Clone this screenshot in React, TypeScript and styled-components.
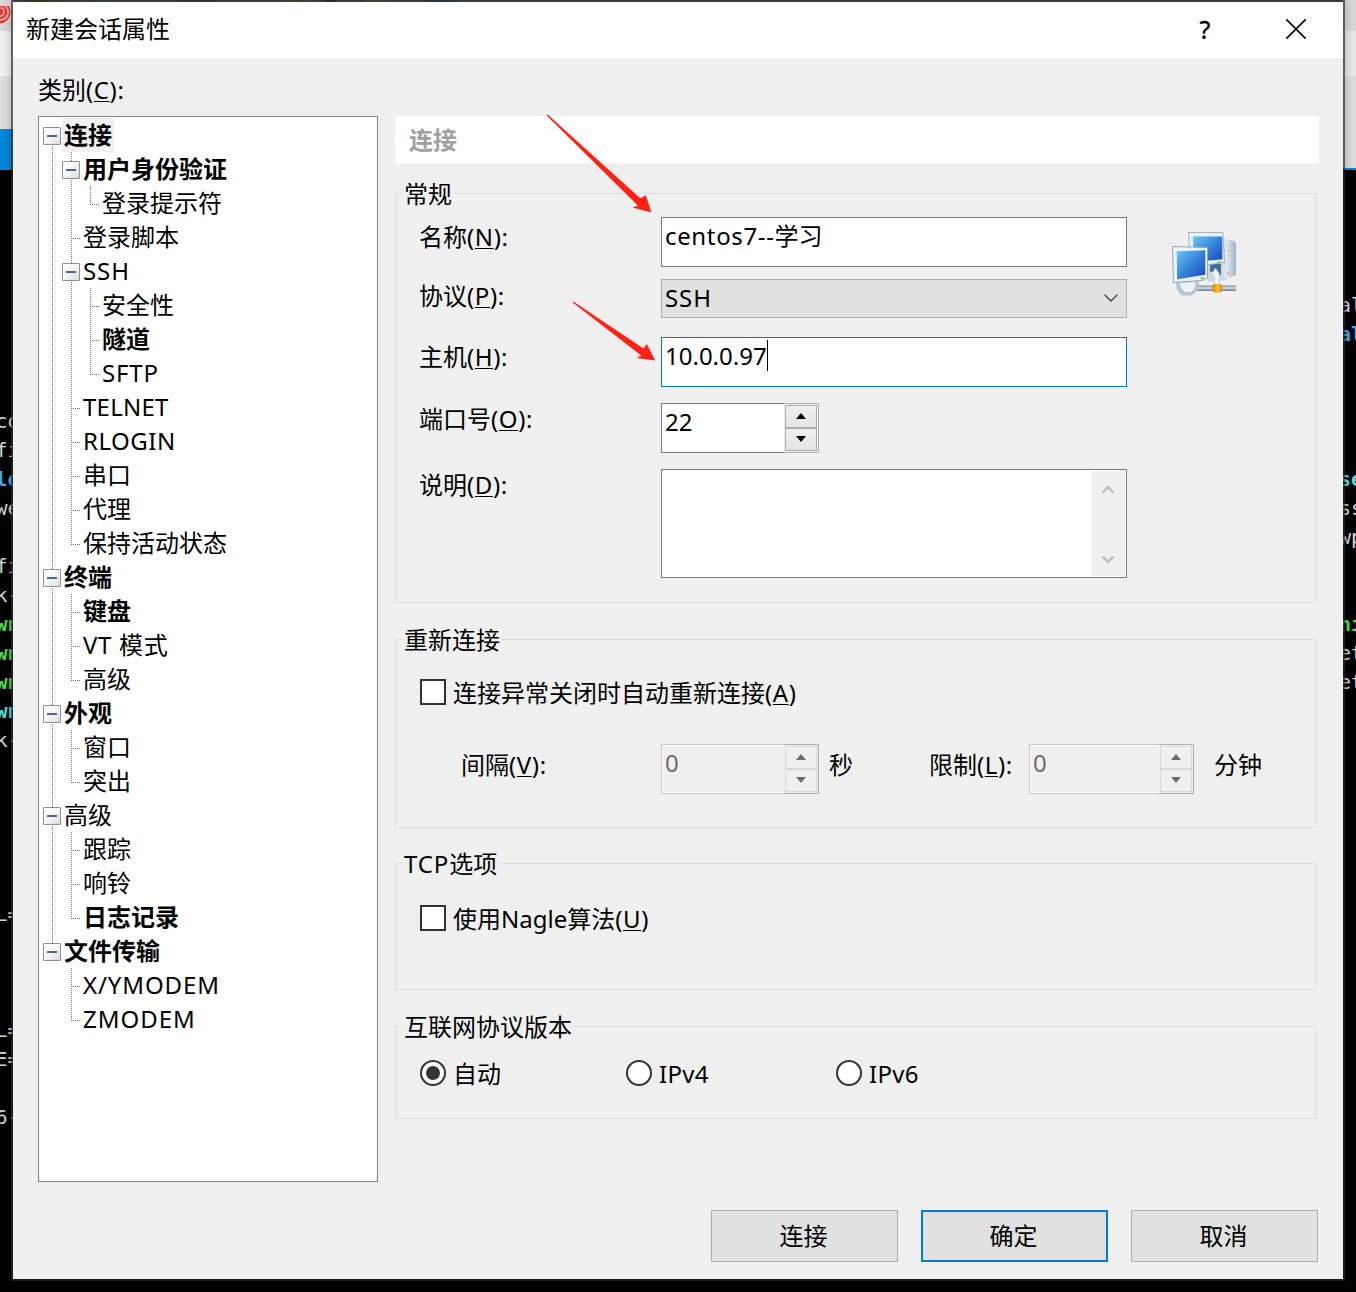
import React from "react";
import styled, { createGlobalStyle, css } from "styled-components";

const GlobalStyle = createGlobalStyle`
  * { box-sizing: border-box; }
  body { margin: 0; background: #000; }
`;

/* ---------- desktop behind the dialog ---------- */

const Desktop = styled.div`
  position: relative;
  display: grid;
  grid-template-columns: 13px 1330px 13px;
  width: 1356px;
  height: 1292px;
  overflow: hidden;
  background: #000;
  color: #000;
  font: 24px/34px "Noto Sans", "Noto Sans CJK SC", sans-serif;
  white-space: nowrap;
`;

const Strip = styled.div`
  display: flex;
  flex-direction: column;
  overflow: hidden;
  min-width: 0;
`;

const Band = styled.div<{ $h: number; $bg: string }>`
  flex: none;
  height: ${(p) => p.$h}px;
  background: ${(p) => p.$bg};
  overflow: hidden;
`;

const Terminal = styled.div<{ $shift: number }>`
  padding-top: 5px;
  margin-left: ${(p) => p.$shift}px;
  font: 20px/29px "DejaVu Sans Mono", monospace;
`;

const TermLine = styled.div<{ $color?: string }>`
  height: 29px;
  color: ${(p) => p.$color ?? "#d8d8d8"};
  font-weight: ${(p) => (p.$color ? 700 : 400)};
`;

const Center = styled.div`
  display: flex;
  flex-direction: column;
`;

const Toolbar = styled.div`
  height: 2px;
  background: linear-gradient(
    90deg,
    #696969 0 14px, #3f6a1c 14px 44px, #696969 44px 78px, #3f7a58 78px 94px,
    #696969 94px 168px, #4b4b4b 168px 202px, #696969 202px 272px, #8d6a40 272px 300px,
    #696969 300px 312px, #333 312px 323px, #696969 323px 352px, #7d7d50 352px 372px,
    #696969 372px 412px, #2d5d8d 412px 445px, #696969 445px
  );
`;

/* ---------- dialog ---------- */

const Dialog = styled.div`
  position: relative;
  width: 1330px;
  height: 1277px;
  background: #f0f0f0;
  box-shadow: 0 0 0 2px rgba(42, 42, 42, 0.66), 0 0 10px 2px rgba(0, 0, 0, 0.25);
`;

const TitleBar = styled.div`
  display: flex;
  align-items: center;
  height: 56px;
  padding: 0 36px 2px 13px;
  background: #fff;
`;

const Title = styled.div`
  flex: 1;
`;

const HelpMark = styled.div`
  width: 14px;
  margin-right: 73px;
  font-size: 25px;
  text-align: center;
  -webkit-text-stroke: 0.4px #000;
`;

const Main = styled.div`
  display: flex;
  gap: 17px;
  padding: 15px 24px 0 25px;
`;

const Sidebar = styled.div`
  width: 340px;
`;

const Key = styled.span`
  letter-spacing: 0.6px;
`;

const Underlined = styled.span`
  text-decoration: underline;
  text-decoration-thickness: 1px;
  text-underline-offset: 2px;
  text-decoration-skip-ink: none;
`;

const Spaced = styled.span<{ $ls: number }>`
  letter-spacing: ${(p) => p.$ls}px;
`;

const Tree = styled.div`
  height: 1066px;
  margin-top: 9px;
  padding: 1px 0 0 4px;
  border: 1px solid #828790;
  background: #fff;
`;

const TreeRow = styled.div`
  display: flex;
  height: 34px;
`;

type Guide = "none" | "through" | "tee" | "end" | "start";

const dotsV = "repeating-linear-gradient(180deg, #6f6f6f 0 1px, transparent 1px 2px)";
const dotsH = "repeating-linear-gradient(90deg, #6f6f6f 0 1px, transparent 1px 2px)";

const guideStyles: Record<Guide, ReturnType<typeof css>> = {
  none: css``,
  through: css`
    background: ${dotsV} 9px 0 / 1px 34px no-repeat;
  `,
  tee: css`
    background: ${dotsV} 9px 0 / 1px 34px no-repeat, ${dotsH} 9px 18px / 10px 1px no-repeat;
  `,
  end: css`
    background: ${dotsV} 9px 0 / 1px 18px no-repeat, ${dotsH} 9px 18px / 10px 1px no-repeat;
  `,
  start: css`
    background: ${dotsV} 9px 18px / 1px 16px no-repeat, ${dotsH} 9px 18px / 10px 1px no-repeat;
  `,
};

const GuideCell = styled.div<{ $guide: Guide }>`
  width: 19px;
  height: 34px;
  padding-top: 9px;
  ${(p) => guideStyles[p.$guide]}
`;

const Expander = styled.div`
  display: flex;
  align-items: center;
  justify-content: center;
  width: 18px;
  height: 18px;
  border: 1px solid #919191;
  border-radius: 1px;
  background: linear-gradient(135deg, #fff 30%, #dcdcdc);

  &::after {
    content: "";
    width: 10px;
    height: 2px;
    background: #4b63a7;
  }
`;

const NodeText = styled.div<{ $bold?: boolean; $selected?: boolean; $ls?: number }>`
  padding: 0 2px;
  line-height: 33px;
  height: 34px;
  font-weight: ${(p) => (p.$bold ? 700 : 400)};
  letter-spacing: ${(p) => p.$ls ?? 0}px;
  background: ${(p) => (p.$selected ? "#f0f0f0" : "transparent")};
`;

const Panel = styled.div`
  width: 924px;
  padding-top: 43px;
`;

const PanelHeader = styled.div`
  height: 47px;
  margin-bottom: 30px;
  padding-left: 14px;
  background: #fff;
  color: #a0a0a0;
  font-weight: 700;
  line-height: 48px;
`;

const Group = styled.div<{ $h: number; $gap: number }>`
  width: 921px;
  height: ${(p) => p.$h}px;
  margin-bottom: ${(p) => p.$gap}px;
  border: 1px solid #dcdcdc;
`;

const GroupTitle = styled.div`
  width: fit-content;
  height: 34px;
  margin: -16px 0 0 6px;
  padding: 0 2px;
  line-height: 32px;
  background: #f0f0f0;
`;

const GeneralBody = styled.div`
  display: flex;
  align-items: flex-start;
  gap: 45px;
  padding: 5px 0 0 23px;
`;

const Fields = styled.div`
  width: 708px;
`;

const FieldRow = styled.div<{ $gap: number }>`
  display: flex;
  align-items: flex-start;
  margin-bottom: ${(p) => p.$gap}px;
`;

const FieldLabel = styled.div<{ $top?: number }>`
  width: 242px;
  padding-top: ${(p) => p.$top ?? 0}px;
  line-height: 32px;
`;

const IconSlot = styled.div`
  padding-top: 15px;
`;

const TextBox = styled.div<{ $focus?: boolean }>`
  display: flex;
  width: 466px;
  height: 50px;
  padding: 1px 3px;
  border: 1px solid ${(p) => (p.$focus ? "#0078d7" : "#7a7a7a")};
  background: #fff;
`;

const Caret = styled.div`
  width: 1px;
  height: 31px;
  margin-top: 1px;
  background: #000;
`;

const Select = styled.div`
  display: flex;
  align-items: center;
  justify-content: space-between;
  width: 466px;
  height: 39px;
  padding: 0 8px 1px 3px;
  border: 1px solid #adadad;
  background: #e1e1e1;
`;

const TextArea = styled.div`
  display: flex;
  justify-content: flex-end;
  width: 466px;
  height: 109px;
  padding: 1px;
  border: 1px solid #7a7a7a;
  background: #fff;
`;

const ScrollTrack = styled.div`
  display: flex;
  flex-direction: column;
  justify-content: space-between;
  align-items: center;
  width: 33px;
  padding: 13px 1px 11px 0;
  background: #f0f0f0;
`;

const SpinBox = styled.div<{ $w: number }>`
  display: flex;
  width: ${(p) => p.$w}px;
  height: 50px;
`;

const SpinValue = styled.div<{ $disabled?: boolean }>`
  flex: 1;
  padding: 1px 3px;
  border: 1px solid ${(p) => (p.$disabled ? "#c8c8c8" : "#7a7a7a")};
  border-right: 0;
  background: ${(p) => (p.$disabled ? "#f0f0f0" : "#fff")};
  color: ${(p) => (p.$disabled ? "#6d6d6d" : "#000")};
  box-shadow: ${(p) => (p.$disabled ? "inset 1px 1px #fff, inset 0 -1px #fff" : "none")};
`;

const SpinButtons = styled.div`
  display: flex;
  flex-direction: column;
  width: 35px;
  padding: 1px;
  border: 1px solid #abadb3;
  border-left: 0;
  background: #f0f0f0;
`;

const SpinButton = styled.div<{ $disabled?: boolean }>`
  display: flex;
  flex: 1;
  align-items: center;
  justify-content: center;
  width: 32px;
  padding-bottom: 1px;
  border: 1px solid ${(p) => (p.$disabled ? "#d9d9d9" : "#acacac")};
  background: ${(p) => (p.$disabled ? "#f0f0f0" : "linear-gradient(#f0f0f0, #e5e5e5)")};
`;

const CheckRow = styled.div<{ $top: number }>`
  display: flex;
  gap: 7px;
  padding: ${(p) => p.$top}px 0 0 24px;
`;

const CheckBox = styled.div`
  width: 26px;
  height: 26px;
  margin-top: 3px;
  border: 2px solid #333;
  background: #fff;
`;

const IntervalRow = styled.div`
  display: flex;
  align-items: flex-start;
  padding: 34px 0 0 65px;
`;

const Caption = styled.div<{ $w: number; $ml?: number }>`
  width: ${(p) => p.$w}px;
  margin-left: ${(p) => p.$ml ?? 0}px;
  padding-top: 4px;
`;

const RadioRow = styled.div`
  display: grid;
  grid-template-columns: 206px 210px 120px;
  padding: 12px 0 0 24px;
`;

const RadioItem = styled.div`
  display: flex;
  gap: 7px;
`;

const Radio = styled.div<{ $on?: boolean }>`
  display: flex;
  align-items: center;
  justify-content: center;
  width: 26px;
  height: 26px;
  margin-top: 3px;
  border: 2px solid #333;
  border-radius: 50%;
  background: #fff;

  &::after {
    content: "";
    width: 14px;
    height: 14px;
    border-radius: 50%;
    background: ${(p) => (p.$on ? "#333" : "transparent")};
  }
`;

const Footer = styled.div`
  display: flex;
  justify-content: flex-end;
  gap: 23px;
  padding: 28px 25px 0 0;
`;

const Button = styled.div<{ $primary?: boolean }>`
  display: flex;
  align-items: center;
  justify-content: center;
  width: 187px;
  height: 52px;
  padding: 0 2px 1px 0;
  border: ${(p) => (p.$primary ? "2px solid #0078d7" : "1px solid #adadad")};
  background: #e1e1e1;
`;

const Annotations = styled.svg`
  position: absolute;
  left: 0;
  top: 0;
  pointer-events: none;
`;

/* ---------- data ---------- */

type Line = [text: string, color?: string];

const GREEN = "#4be04b";
const CYAN = "#4fe3e3";
const BLUE = "#45a8ea";

const blank = (n: number): Line[] => Array.from({ length: n }, () => [""] as Line);

const leftLines: Line[] = [
  ...blank(8),
  ["co"], ["fi"], ["le", BLUE], ["we"], [""], ["fi"], ["k-"],
  ["wn", GREEN], ["wn", GREEN], ["wn", GREEN], ["wn", CYAN], ["k-"],
  ...blank(5),
  ["L="],
  ...blank(3),
  ["L="], ["E="], [""], ["6-"],
];

const rightLines: Line[] = [
  ...blank(4),
  ["al"], ["al", BLUE],
  ...blank(4),
  ["se", CYAN], ["ss"], ["wp"],
  ...blank(2),
  ["ni", GREEN], ["et"], ["et"],
];

interface TreeNode {
  label: string;
  bold?: boolean;
  selected?: boolean;
  spacing?: number;
  children?: TreeNode[];
}

const tree: TreeNode[] = [
  {
    label: "连接", bold: true, selected: true,
    children: [
      { label: "用户身份验证", bold: true, children: [{ label: "登录提示符" }] },
      { label: "登录脚本" },
      {
        label: "SSH", spacing: 0.9,
        children: [{ label: "安全性" }, { label: "隧道", bold: true }, { label: "SFTP", spacing: 0.8 }],
      },
      { label: "TELNET", spacing: 0.25 },
      { label: "RLOGIN", spacing: 0.5 },
      { label: "串口" },
      { label: "代理" },
      { label: "保持活动状态" },
    ],
  },
  {
    label: "终端", bold: true,
    children: [{ label: "键盘", bold: true }, { label: "VT 模式", spacing: 0.7 }, { label: "高级" }],
  },
  { label: "外观", bold: true, children: [{ label: "窗口" }, { label: "突出" }] },
  { label: "高级", children: [{ label: "跟踪" }, { label: "响铃" }, { label: "日志记录", bold: true }] },
  {
    label: "文件传输", bold: true,
    children: [{ label: "X/YMODEM", spacing: 0.9 }, { label: "ZMODEM", spacing: 1 }],
  },
];

/* ---------- parts ---------- */

function TreeLevel({ nodes, guides }: { nodes: TreeNode[]; guides: Guide[] }) {
  return (
    <>
      {nodes.map((node, i) => {
        const last = i === nodes.length - 1;
        const first = i === 0 && guides.length === 0;
        const own: Guide = first ? "start" : last ? "end" : "tee";
        return (
          <React.Fragment key={node.label}>
            <TreeRow>
              {guides.map((g, k) => (
                <GuideCell key={k} $guide={g} />
              ))}
              <GuideCell $guide={own}>{node.children && <Expander />}</GuideCell>
              <NodeText $bold={node.bold} $selected={node.selected} $ls={node.spacing}>{node.label}</NodeText>
            </TreeRow>
            {node.children && (
              <TreeLevel nodes={node.children} guides={[...guides, last ? "none" : "through"]} />
            )}
          </React.Fragment>
        );
      })}
    </>
  );
}

function Mnemonic({ text, letter, colon = true }: { text: string; letter: string; colon?: boolean }) {
  return (
    <div>
      {text}
      <Key>
        (<Underlined>{letter}</Underlined>){colon && ":"}
      </Key>
    </div>
  );
}

function Triangle({ down, color }: { down?: boolean; color: string }) {
  return (
    <svg width="10" height="6" viewBox="0 0 10 6">
      <path d={down ? "M0 0H10L5 6Z" : "M0 6H10L5 0Z"} fill={color} />
    </svg>
  );
}

function Spin({ value, width, disabled }: { value: string; width: number; disabled?: boolean }) {
  const color = disabled ? "#6d6d6d" : "#000";
  return (
    <SpinBox $w={width}>
      <SpinValue $disabled={disabled}>{value}</SpinValue>
      <SpinButtons>
        <SpinButton $disabled={disabled}><Triangle color={color} /></SpinButton>
        <SpinButton $disabled={disabled}><Triangle down color={color} /></SpinButton>
      </SpinButtons>
    </SpinBox>
  );
}

function ScrollChevron({ down }: { down?: boolean }) {
  return (
    <svg width="12" height="10" viewBox="0 0 12 10">
      <path d={down ? "M0.7 1.6L6 6.9L11.3 1.6" : "M0.7 8.4L6 3.1L11.3 8.4"} fill="none" stroke="#bfbfbf" strokeWidth="2.6" />
    </svg>
  );
}

function NetworkIcon() {
  return (
    <svg width="66" height="66" viewBox="0 0 66 66">
      <defs>
        <linearGradient id="screen" x1="0" y1="0" x2="1" y2="1">
          <stop offset="0" stopColor="#6cc6f2" />
          <stop offset="0.5" stopColor="#3585dc" />
          <stop offset="1" stopColor="#1c46b4" />
        </linearGradient>
        <linearGradient id="case" x1="0" y1="0" x2="1" y2="0">
          <stop offset="0" stopColor="#b4c5d2" />
          <stop offset="0.55" stopColor="#e3eaef" />
          <stop offset="1" stopColor="#9db3c4" />
        </linearGradient>
        <linearGradient id="pipe" x1="0" y1="0" x2="0" y2="1">
          <stop offset="0" stopColor="#6f8495" />
          <stop offset="0.45" stopColor="#d5dfe6" />
          <stop offset="1" stopColor="#5c7285" />
        </linearGradient>
        <linearGradient id="plug" x1="0" y1="0" x2="1" y2="0">
          <stop offset="0" stopColor="#e28212" />
          <stop offset="0.6" stopColor="#ffc02c" />
          <stop offset="1" stopColor="#e27a10" />
        </linearGradient>
      </defs>
      <path d="M46 4L54 6.5L62 9Q64 10 64 12V43L55 47L44 43Z" fill="url(#case)" />
      <path d="M55 13L61 14M55 18L61 19M55 23L61 24" stroke="#b4c4d0" strokeWidth="1" />
      <circle cx="56" cy="41" r="1.2" fill="#f2a08c" />
      <path d="M36 31H48L50 44L55 48L36 50L34 46Z" fill="#ccd8e1" />
      <path d="M38 32H49V44L45 38L42 44L38 39Z" fill="#3f6f9c" />
      <path d="M43.5 36L47.5 43V53H42.5V45L38 40L41 40Z" fill="#eef2f5" stroke="#b4c4d0" strokeWidth="0.6" />
      <path d="M16.5 0.5H51L52.5 30L36 33L18 29Z" fill="#e9eff3" stroke="#a0b3c1" strokeWidth="1" />
      <path d="M21 4.5H50.3V27.3L22 30Z" fill="url(#screen)" />
      <rect x="45" y="29.5" width="4" height="2" fill="#76d058" />
      <rect x="25" y="53.5" width="39" height="5.5" rx="1" fill="url(#pipe)" />
      <path d="M4 50L27 48Q28 60 19 63.5H10Q4 60 4 50Z" fill="#b6c6d2" />
      <path d="M8 51L23 50Q24 57 19 60H13Q8 57 8 51Z" fill="#edf2f5" />
      <path d="M0.5 14.5L35.5 15.5V46L30 48.5L1.5 50.5Z" fill="#eff3f6" stroke="#94a9b9" strokeWidth="1" />
      <path d="M4.7 19.3L33.3 18.3V42.7L5.2 47.2Z" fill="url(#screen)" />
      <path d="M28.5 45.5L32 45V47L28.5 47.5Z" fill="#76d058" />
      <rect x="40.5" y="52" width="9.5" height="8.5" rx="2" fill="url(#plug)" />
    </svg>
  );
}

const renderLines = (lines: Line[]) =>
  lines.map(([text, color], i) => (
    <TermLine key={i} $color={color}>{text}</TermLine>
  ));

export default function App() {
  return (
    <Desktop>
      <GlobalStyle />
      <Strip>
        <Band $h={31} $bg="#dadada">
          <svg width="13" height="20" viewBox="0 0 13 20">
            <circle cx="-1" cy="6" r="11.5" fill="#e93a34" />
            <path d="M-1 2Q5 1 4 7Q2 11 -2 10M1 -2Q9 0 8 8Q6 14 -1 14" fill="none" stroke="#f6c9c6" strokeWidth="1.4" />
          </svg>
        </Band>
        <Band $h={45} $bg="#f2f2f2" />
        <Band $h={53} $bg="#e0e0e0" />
        <Band $h={41} $bg="#0088dd" />
        <Terminal $shift={-4.5}>{renderLines(leftLines)}</Terminal>
      </Strip>
      <Center>
        <Toolbar />
        <Dialog>
          <TitleBar>
            <Title>新建会话属性</Title>
            <HelpMark>?</HelpMark>
            <svg width="22" height="22" viewBox="0 0 22 22">
              <path d="M1.3 1.3L20.7 20.7M20.7 1.3L1.3 20.7" stroke="#111" strokeWidth="1.8" />
            </svg>
          </TitleBar>
          <Main>
            <Sidebar>
              <Mnemonic text="类别" letter="C" />
              <Tree>
                <TreeLevel nodes={tree} guides={[]} />
              </Tree>
            </Sidebar>
            <Panel>
              <PanelHeader>连接</PanelHeader>
              <Group $h={410} $gap={36}>
                <GroupTitle>常规</GroupTitle>
                <GeneralBody>
                  <Fields>
                    <FieldRow $gap={12}>
                      <FieldLabel $top={4}><Mnemonic text="名称" letter="N" /></FieldLabel>
                      <TextBox><Spaced $ls={0.65}>centos7--</Spaced>学习</TextBox>
                    </FieldRow>
                    <FieldRow $gap={19}>
                      <FieldLabel $top={1}><Mnemonic text="协议" letter="P" /></FieldLabel>
                      <Select>
                        <Spaced $ls={0.9}>SSH</Spaced>
                        <svg width="14" height="8" viewBox="0 0 14 8">
                          <path d="M0.7 0.8L7 7L13.3 0.8" fill="none" stroke="#444" strokeWidth="1.3" />
                        </svg>
                      </Select>
                    </FieldRow>
                    <FieldRow $gap={16}>
                      <FieldLabel $top={4}><Mnemonic text="主机" letter="H" /></FieldLabel>
                      <TextBox $focus>10.0.0.97<Caret /></TextBox>
                    </FieldRow>
                    <FieldRow $gap={16}>
                      <FieldLabel><Mnemonic text="端口号" letter="O" /></FieldLabel>
                      <Spin value="22" width={158} />
                    </FieldRow>
                    <FieldRow $gap={0}>
                      <FieldLabel><Mnemonic text="说明" letter="D" /></FieldLabel>
                      <TextArea>
                        <ScrollTrack>
                          <ScrollChevron />
                          <ScrollChevron down />
                        </ScrollTrack>
                      </TextArea>
                    </FieldRow>
                  </Fields>
                  <IconSlot><NetworkIcon /></IconSlot>
                </GeneralBody>
              </Group>
              <Group $h={189} $gap={35}>
                <GroupTitle>重新连接</GroupTitle>
                <CheckRow $top={18}>
                  <CheckBox />
                  <Mnemonic text="连接异常关闭时自动重新连接" letter="A" colon={false} />
                </CheckRow>
                <IntervalRow>
                  <Caption $w={200}><Mnemonic text="间隔" letter="V" /></Caption>
                  <Spin value="0" width={158} disabled />
                  <Caption $w={100} $ml={10}>秒</Caption>
                  <Caption $w={100}><Mnemonic text="限制" letter="L" /></Caption>
                  <Spin value="0" width={165} disabled />
                  <Caption $w={50} $ml={20}>分钟</Caption>
                </IntervalRow>
              </Group>
              <Group $h={127} $gap={36}>
                <GroupTitle><Spaced $ls={0.9}>TCP</Spaced>选项</GroupTitle>
                <CheckRow $top={20}>
                  <CheckBox />
                  <Mnemonic text="使用Nagle算法" letter="U" colon={false} />
                </CheckRow>
              </Group>
              <Group $h={93} $gap={0}>
                <GroupTitle>互联网协议版本</GroupTitle>
                <RadioRow>
                  <RadioItem><Radio $on />自动</RadioItem>
                  <RadioItem><Radio /><Spaced $ls={0.3}>IPv4</Spaced></RadioItem>
                  <RadioItem><Radio /><Spaced $ls={0.3}>IPv6</Spaced></RadioItem>
                </RadioRow>
              </Group>
            </Panel>
          </Main>
          <Footer>
            <Button>连接</Button>
            <Button $primary>确定</Button>
            <Button>取消</Button>
          </Footer>
        </Dialog>
      </Center>
      <Strip>
        <Band $h={31} $bg="#d8d8d8" />
        <Band $h={45} $bg="#e8e8e8" />
        <Band $h={92} $bg="#dcdcdc" />
        <Band $h={2} $bg="#0088dd" />
        <Terminal $shift={-4}>{renderLines(rightLines)}</Terminal>
      </Strip>
      <Annotations width="1356" height="400" viewBox="0 0 1356 400">
        <path d="M546.7 115.4L547.6 114.6L640.3 198.3L645.8 195.2L651.4 212.5L632.6 207.4L637.8 205.6Z" fill="#ff2213" />
        <path d="M572.7 302.4L573.4 301.6L643.5 348.6L646.7 344.1L655.2 360.5L636.7 358L641.2 355.6Z" fill="#ff2213" />
      </Annotations>
    </Desktop>
  );
}
